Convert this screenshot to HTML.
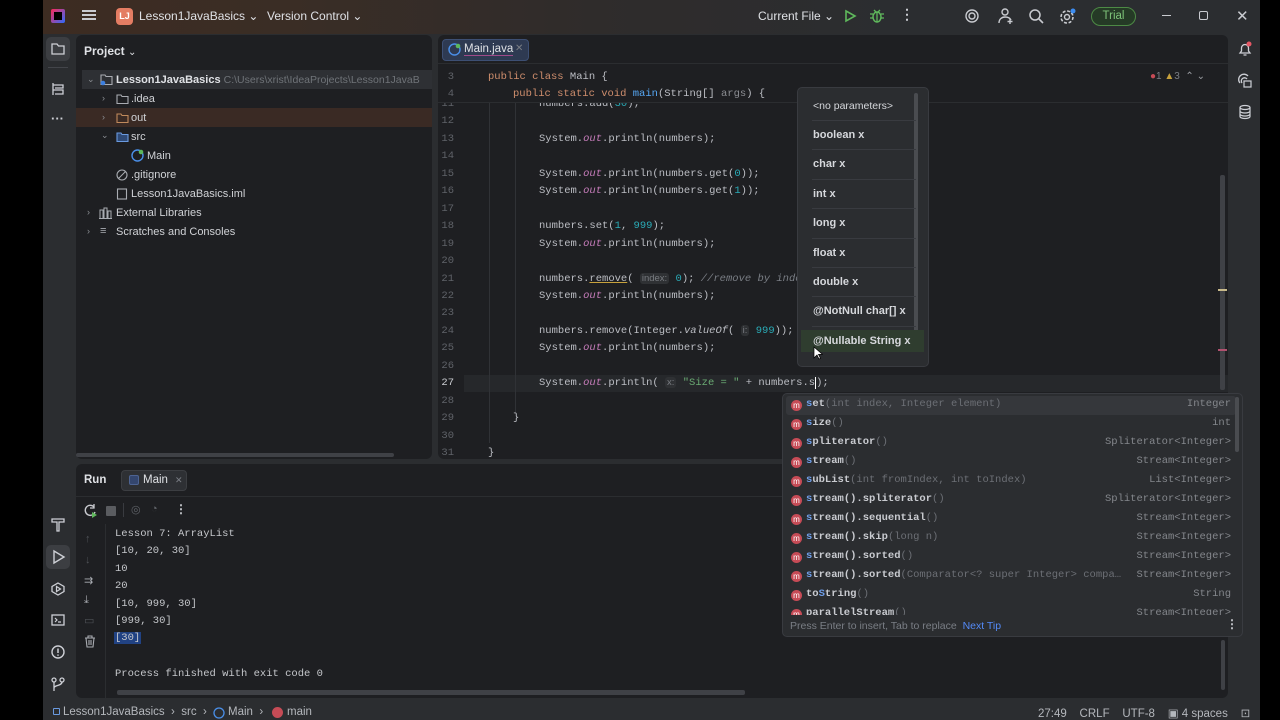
<!DOCTYPE html>
<html><head><meta charset="utf-8">
<style>
*{margin:0;padding:0;box-sizing:border-box}
body{width:1280px;height:720px;background:#000;position:relative;overflow:hidden;font-family:"Liberation Sans",sans-serif;color:#c9cbd0;font-size:11.5px}
.a{position:absolute;white-space:pre}
#win{position:absolute;left:43px;top:0;width:1217px;height:720px;background:#2b2d30}
#title{position:absolute;left:43px;top:0;width:1217px;height:34px;background:linear-gradient(90deg,#3d2c22 0%,#3a2d25 20%,#2f2c2b 45%,#2b2d30 70%)}
.panel{position:absolute;background:#1e1f22;border-radius:6px}
.ln{color:#5f6268;font-family:"Liberation Mono",monospace;font-size:10.5px;position:absolute;left:440px;width:14px;text-align:right}
.code{position:absolute;font-family:"Liberation Mono",monospace;font-size:10.5px;color:#bcbec4;white-space:pre}
.ln,.code,.out,.tr,.pr,.cr,.ct,.mi,.sb{margin-top:2px}
.k{color:#cf8e6d}.f{color:#56a8f5}.s{color:#c77dbb;font-style:italic}.n{color:#2aacb8}.st{color:#6aab73}.c{color:#7a7e85;font-style:italic}
.hint{background:#2f3134;color:#787b80;border-radius:3px;padding:0 2px;font-family:"Liberation Sans",sans-serif;font-size:9.5px}
.pr{position:absolute;left:813px;font-size:11px;color:#d6d8dc}
.sep{position:absolute;left:812px;width:104px;height:1px;background:#393b40}
.cr{position:absolute;left:806px;font-family:"Liberation Mono",monospace;font-size:10.5px;color:#c9cbd0;font-weight:bold;white-space:pre}
.cr i{font-style:normal;font-weight:normal;color:#6c6f75}
.cr b{color:#6f9ee8}
.ct{position:absolute;right:49px;font-family:"Liberation Mono",monospace;font-size:10.5px;color:#84878c;white-space:pre}
.mi{position:absolute;left:791px;width:11px;height:11px;border-radius:50%;background:#c64b56;color:#fff;font-size:8px;line-height:11px;text-align:center;font-family:"Liberation Sans",sans-serif}
.tr{position:absolute;font-size:11px;color:#d0d2d6;white-space:pre}
.out{position:absolute;left:115px;font-family:"Liberation Mono",monospace;font-size:10.5px;color:#c5c7cb;white-space:pre}
</style></head><body>
<div id="win"></div>
<div id="title"></div>
<!-- title bar -->
<div class="a" style="left:51px;top:9px;width:14px;height:14px;background:linear-gradient(135deg,#fe2857,#2b6bff);border-radius:2px"></div>
<div class="a" style="left:54px;top:12px;width:8px;height:8px;background:#000"></div>
<div class="a" style="left:82px;top:10px;width:14px;height:2px;background:#c9cbd0;box-shadow:0 4px 0 #c9cbd0,0 8px 0 #c9cbd0"></div>
<div class="a" style="left:116px;top:8px;width:17px;height:17px;background:#e47d63;border-radius:4px;color:#fff;font-size:9px;line-height:17px;text-align:center;font-weight:bold">LJ</div>
<div class="a" style="left:139px;top:9px;font-size:12px;color:#dfe1e5">Lesson1JavaBasics ⌄</div>
<div class="a" style="left:267px;top:9px;font-size:12px;color:#dfe1e5">Version Control ⌄</div>
<div class="a" style="left:758px;top:9px;font-size:12px;color:#dfe1e5">Current File ⌄</div>
<svg class="a" style="left:843px;top:9px" width="14" height="14"><path d="M3 2 L12 7 L3 12 Z" fill="none" stroke="#5fb85c" stroke-width="1.6"/></svg>
<svg class="a" style="left:869px;top:8px" width="16" height="16"><ellipse cx="8" cy="9" rx="4" ry="5" fill="none" stroke="#5fb85c" stroke-width="1.5"/><path d="M1 6h3M12 6h3M1 10h3M12 10h3M8 4v10M5 2l2 2M11 2l-2 2" stroke="#5fb85c" stroke-width="1.3"/></svg>
<div class="a" style="left:900px;top:6px;font-size:14px;color:#c9cbd0;font-weight:bold">⋮</div>
<svg class="a" style="left:964px;top:8px" width="16" height="16"><circle cx="8" cy="8" r="6" fill="none" stroke="#c9cbd0" stroke-width="1.4"/><circle cx="8" cy="8" r="3" fill="none" stroke="#c9cbd0" stroke-width="1.4"/></svg>
<svg class="a" style="left:997px;top:7px" width="18" height="18"><circle cx="8" cy="5" r="3" fill="none" stroke="#c9cbd0" stroke-width="1.4"/><path d="M2 16c0-4 3-6 6-6s5 1 6 3M13 12v5M10.5 14.5h5" fill="none" stroke="#c9cbd0" stroke-width="1.4"/></svg>
<svg class="a" style="left:1028px;top:8px" width="16" height="16"><circle cx="7" cy="7" r="5" fill="none" stroke="#c9cbd0" stroke-width="1.5"/><path d="M11 11l4 4" stroke="#c9cbd0" stroke-width="1.6"/></svg>
<svg class="a" style="left:1059px;top:8px" width="18" height="18"><circle cx="8" cy="9" r="6" fill="none" stroke="#c9cbd0" stroke-width="1.6" stroke-dasharray="3 1.7"/><circle cx="8" cy="9" r="2.5" fill="none" stroke="#c9cbd0" stroke-width="1.4"/><circle cx="14" cy="3" r="2.5" fill="#3c8cf0"/></svg>
<div class="a" style="left:1091px;top:7px;width:45px;height:19px;border:1px solid #4d8a45;background:#253a26;border-radius:10px;color:#7ec47a;font-size:11.5px;text-align:center;line-height:17px">Trial</div>
<div class="a" style="left:1162px;top:15px;width:9px;height:1px;background:#c9cbd0"></div>
<div class="a" style="left:1199px;top:11px;width:9px;height:9px;border:1.3px solid #c9cbd0;border-radius:2px"></div>
<div class="a" style="left:1236px;top:7px;font-size:15px;color:#c9cbd0">✕</div>

<!-- left stripe -->
<div class="a" style="left:46px;top:37px;width:24px;height:24px;background:#3c3e42;border-radius:5px"></div>
<svg class="a" style="left:50px;top:41px" width="16" height="16"><path d="M2 3h5l1.5 2H14v8H2z" fill="none" stroke="#ced0d6" stroke-width="1.3"/></svg>
<div class="a" style="left:48px;top:67px;width:20px;height:1px;background:#43454a"></div>
<svg class="a" style="left:50px;top:81px" width="16" height="16"><path d="M3 2v12M3 4h10v3H5M3 9h10v4H5" fill="none" stroke="#ced0d6" stroke-width="1.3"/></svg>
<div class="a" style="left:51px;top:111px;font-size:13px;color:#ced0d6;font-weight:bold">···</div>
<svg class="a" style="left:50px;top:517px" width="16" height="16"><path d="M2 2h12v3H9v9H7V5H2z" fill="none" stroke="#ced0d6" stroke-width="1.3"/></svg>
<div class="a" style="left:46px;top:545px;width:24px;height:24px;background:#3c3e42;border-radius:5px"></div>
<svg class="a" style="left:50px;top:549px" width="16" height="16"><path d="M4 2l10 6-10 6z" fill="none" stroke="#ced0d6" stroke-width="1.4"/></svg>
<svg class="a" style="left:50px;top:581px" width="16" height="16"><path d="M8 2l6 3.5v5L8 14l-6-3.5v-5z" fill="none" stroke="#ced0d6" stroke-width="1.3"/><path d="M6.5 5.5l4 2.5-4 2.5z" fill="none" stroke="#ced0d6" stroke-width="1.2"/></svg>
<svg class="a" style="left:50px;top:612px" width="16" height="16"><rect x="2" y="3" width="12" height="10" fill="none" stroke="#ced0d6" stroke-width="1.3"/><path d="M5 6l2 2-2 2M8 10h3" fill="none" stroke="#ced0d6" stroke-width="1.2"/></svg>
<svg class="a" style="left:50px;top:644px" width="16" height="16"><circle cx="8" cy="8" r="6" fill="none" stroke="#ced0d6" stroke-width="1.4"/><path d="M8 4.5v4.5M8 10.5v1.3" stroke="#ced0d6" stroke-width="1.5"/></svg>
<svg class="a" style="left:50px;top:676px" width="16" height="16"><circle cx="4" cy="4" r="2" fill="none" stroke="#ced0d6" stroke-width="1.3"/><circle cx="12" cy="4" r="2" fill="none" stroke="#ced0d6" stroke-width="1.3"/><path d="M4 6v9M12 6c0 4-8 3-8 6" fill="none" stroke="#ced0d6" stroke-width="1.3"/></svg>

<!-- project panel -->
<div class="panel" style="left:76px;top:35px;width:356px;height:424px"></div>
<div class="a" style="left:84px;top:44px;font-size:12px;color:#dfe1e5;font-weight:bold">Project <span style="font-weight:normal;font-size:10px">⌄</span></div>
<div class="a" style="left:82px;top:70px;width:350px;height:19px;background:#2e3034"></div>
<div class="a" style="left:76px;top:108px;width:356px;height:19px;background:#3a2a24"></div>
<div class="tr" style="left:87px;top:72px;color:#8c8f94;font-size:9px">⌄</div>
<svg class="a" style="left:100px;top:73px" width="14" height="13"><path d="M1 2h4l1 1.5h6v8H1z" fill="none" stroke="#a9acb2" stroke-width="1.1"/><circle cx="3" cy="10" r="2.3" fill="#3c7fe0"/></svg>
<div class="tr" style="left:116px;top:72px;font-weight:bold;color:#dfe1e5">Lesson1JavaBasics <span style="font-weight:normal;color:#6f7378;font-size:10.5px">C:\Users\xrist\IdeaProjects\Lesson1JavaB</span></div>
<div class="tr" style="left:102px;top:91px;color:#8c8f94;font-size:9px">›</div>
<svg class="a" style="left:116px;top:93px" width="13" height="12"><path d="M1 2h4l1 1.5h6v7H1z" fill="none" stroke="#a9acb2" stroke-width="1.1"/></svg>
<div class="tr" style="left:131px;top:91px">.idea</div>
<div class="tr" style="left:102px;top:110px;color:#8c8f94;font-size:9px">›</div>
<svg class="a" style="left:116px;top:112px" width="13" height="12"><path d="M1 2h4l1 1.5h6v7H1z" fill="none" stroke="#c08a5c" stroke-width="1.1"/></svg>
<div class="tr" style="left:131px;top:110px">out</div>
<div class="tr" style="left:101px;top:128px;color:#8c8f94;font-size:9px">⌄</div>
<svg class="a" style="left:116px;top:131px" width="13" height="12"><path d="M1 2h4l1 1.5h6v7H1z" fill="#2f4a76" stroke="#6a9ae0" stroke-width="1.1"/></svg>
<div class="tr" style="left:131px;top:129px">src</div>
<svg class="a" style="left:131px;top:149px" width="13" height="13"><circle cx="6.5" cy="6.5" r="5.5" fill="none" stroke="#4a8fe8" stroke-width="1.4"/><circle cx="10" cy="3" r="2.3" fill="#5bb85c"/></svg>
<div class="tr" style="left:147px;top:148px">Main</div>
<svg class="a" style="left:116px;top:169px" width="12" height="12"><circle cx="6" cy="6" r="5" fill="none" stroke="#a9acb2" stroke-width="1.1"/><path d="M2.5 9.5l7-7" stroke="#a9acb2"/></svg>
<div class="tr" style="left:131px;top:167px">.gitignore</div>
<svg class="a" style="left:116px;top:188px" width="12" height="12"><rect x="1.5" y="1" width="9" height="10" fill="none" stroke="#a9acb2" stroke-width="1.1"/></svg>
<div class="tr" style="left:131px;top:186px">Lesson1JavaBasics.iml</div>
<div class="tr" style="left:87px;top:205px;color:#8c8f94;font-size:9px">›</div>
<svg class="a" style="left:99px;top:207px" width="13" height="12"><path d="M1 11V3h3v8M5 11V1h3v10M9 11V4h3v7M0 11.5h13" fill="none" stroke="#a9acb2" stroke-width="1"/></svg>
<div class="tr" style="left:116px;top:205px">External Libraries</div>
<div class="tr" style="left:87px;top:224px;color:#8c8f94;font-size:9px">›</div>
<div class="tr" style="left:100px;top:223px;color:#a9acb2">≡</div>
<div class="tr" style="left:116px;top:224px">Scratches and Consoles</div>
<div class="a" style="left:76px;top:453px;width:318px;height:4px;background:#3f4146;border-radius:2px"></div>

<!-- editor -->
<div class="panel" style="left:438px;top:35px;width:790px;height:424px;background:#1e1f22"></div>
<div class="a" style="left:438px;top:63px;width:790px;height:1px;background:#2b2d30"></div>
<div class="a" style="left:442px;top:39px;width:87px;height:22px;background:#2e3a52;border:1px solid #3d4f73;border-radius:4px"></div>
<svg class="a" style="left:448px;top:43px" width="13" height="13"><circle cx="6.5" cy="6.5" r="5.5" fill="none" stroke="#4a8fe8" stroke-width="1.4"/><circle cx="10" cy="3" r="2.3" fill="#5bb85c"/></svg>
<div class="a" style="left:464px;top:43px;font-size:11.5px;color:#dfe1e5;border-bottom:1px solid #a04a8a">Main.java</div>
<div class="a" style="left:515px;top:43px;font-size:10px;color:#7a7e85">✕</div>

<div class="a" style="left:464px;top:375px;width:764px;height:17px;background:#26282b"></div>
<div class="a" style="left:489px;top:103px;width:1px;height:340px;background:#303236"></div>
<div class="a" style="left:515px;top:103px;width:1px;height:310px;background:#303236"></div>
<!-- partial line 11 (behind sticky header) -->
<div class="code" style="left:539px;top:96px">numbers.add(<span class="n">30</span>);</div>
<div class="ln" style="top:96px">11</div>
<!-- sticky header -->
<div class="a" style="left:438px;top:64px;width:790px;height:38px;background:#1e1f22"></div>
<div class="a" style="left:438px;top:102px;width:790px;height:1px;background:#2b2d30"></div>
<div class="a" style="left:1150px;top:71px;font-size:10px;color:#c64b56">●<span style="color:#7a7e85">1</span> <span style="color:#c7a13c">▲</span><span style="color:#7a7e85">3</span> <span style="color:#9a9da2">&nbsp;⌃ ⌄</span></div>
<div class="ln" style="top:69px">3</div>
<div class="ln" style="top:86px">4</div>
<div class="code" style="left:488px;top:69px"><span class="k">public class</span> Main {</div>
<div class="code" style="left:513px;top:86px"><span class="k">public static void</span> <span class="f">main</span>(String[] <span style="color:#8b8d92">args</span>) {</div>

<div class="ln" style="top:113px">12</div><div class="ln" style="top:131px">13</div><div class="ln" style="top:148px">14</div><div class="ln" style="top:166px">15</div><div class="ln" style="top:183px">16</div><div class="ln" style="top:201px">17</div><div class="ln" style="top:218px">18</div><div class="ln" style="top:236px">19</div><div class="ln" style="top:253px">20</div><div class="ln" style="top:271px">21</div><div class="ln" style="top:288px">22</div><div class="ln" style="top:305px">23</div><div class="ln" style="top:323px">24</div><div class="ln" style="top:340px">25</div><div class="ln" style="top:358px">26</div><div class="ln" style="top:375px;color:#c9cbd0">27</div><div class="ln" style="top:393px">28</div><div class="ln" style="top:410px">29</div><div class="ln" style="top:428px">30</div><div class="ln" style="top:445px">31</div>

<div class="code" style="left:539px;top:131px">System.<span class="s">out</span>.println(numbers);</div>
<div class="code" style="left:539px;top:166px">System.<span class="s">out</span>.println(numbers.get(<span class="n">0</span>));</div>
<div class="code" style="left:539px;top:183px">System.<span class="s">out</span>.println(numbers.get(<span class="n">1</span>));</div>
<div class="code" style="left:539px;top:218px">numbers.set(<span class="n">1</span>, <span class="n">999</span>);</div>
<div class="code" style="left:539px;top:236px">System.<span class="s">out</span>.println(numbers);</div>
<div class="code" style="left:539px;top:271px">numbers.<span style="text-decoration:underline;text-decoration-color:#c7a13c">remove</span>( <span class="hint">index:</span> <span class="n">0</span>); <span class="c">//remove by inde</span></div>
<div class="code" style="left:539px;top:288px">System.<span class="s">out</span>.println(numbers);</div>
<div class="code" style="left:539px;top:323px">numbers.remove(Integer.<span style="font-style:italic">valueOf</span>( <span class="hint">i:</span> <span class="n">999</span>));</div>
<div class="code" style="left:539px;top:340px">System.<span class="s">out</span>.println(numbers);</div>
<div class="code" style="left:539px;top:375px">System.<span class="s">out</span>.println( <span class="hint">x:</span> <span class="st">"Size = "</span> + numbers.s<span style="border-left:1px solid #fff">)</span>;</div>
<div class="code" style="left:513px;top:410px">}</div>
<div class="code" style="left:488px;top:445px">}</div>

<div class="a" style="left:1220px;top:175px;width:5px;height:215px;background:#3f4146;border-radius:2px"></div>
<div class="a" style="left:1218px;top:289px;width:9px;height:2px;background:#c8b98a"></div>
<div class="a" style="left:1218px;top:349px;width:9px;height:2px;background:#b0516f"></div>

<!-- param popup -->
<div class="a" style="left:797px;top:87px;width:132px;height:280px;background:#2b2d30;border:1px solid #393b40;border-radius:5px"></div>
<div class="a" style="left:914px;top:93px;width:4px;height:245px;background:#4a4c50;border-radius:2px"></div>
<div class="a" style="left:801px;top:330px;width:123px;height:22px;background:#2f3d2f"></div>
<div class="pr" style="top:98px;font-size:10.5px">&lt;no parameters&gt;</div>
<div class="sep" style="top:120px"></div>
<div class="pr" style="top:127px;font-weight:bold">boolean x</div>
<div class="sep" style="top:149px"></div>
<div class="pr" style="top:156px;font-weight:bold">char x</div>
<div class="sep" style="top:179px"></div>
<div class="pr" style="top:186px;font-weight:bold">int x</div>
<div class="sep" style="top:208px"></div>
<div class="pr" style="top:215px;font-weight:bold">long x</div>
<div class="sep" style="top:238px"></div>
<div class="pr" style="top:245px;font-weight:bold">float x</div>
<div class="sep" style="top:267px"></div>
<div class="pr" style="top:274px;font-weight:bold">double x</div>
<div class="sep" style="top:296px"></div>
<div class="pr" style="top:303px;font-weight:bold">@NotNull char[] x</div>
<div class="sep" style="top:326px"></div>
<div class="pr" style="top:333px;font-weight:bold">@Nullable String x</div>
<svg class="a" style="left:813px;top:346px" width="10" height="14"><path d="M1 1v11l3-3 2 4 1.5-.7-2-4h4z" fill="#fff" stroke="#000" stroke-width=".7"/></svg>

<!-- run panel -->
<div class="panel" style="left:76px;top:464px;width:1152px;height:234px"></div>
<div class="a" style="left:84px;top:474px;font-size:11.5px;color:#dfe1e5;font-weight:bold">Run</div>
<div class="a" style="left:121px;top:470px;width:66px;height:21px;background:#2e3034;border:1px solid #3c3e42;border-radius:4px"></div>
<div class="a" style="left:129px;top:475px;width:10px;height:10px;background:#34466e;border:1px solid #4d6392;border-radius:2px"></div>
<div class="a" style="left:143px;top:474px;font-size:11.5px;color:#dfe1e5">Main</div>
<div class="a" style="left:175px;top:475px;font-size:9px;color:#7a7e85">✕</div>
<div class="a" style="left:76px;top:496px;width:1152px;height:1px;background:#2b2d30"></div>
<svg class="a" style="left:83px;top:503px" width="15" height="15"><path d="M11 4A5 5 0 1 0 12 9" fill="none" stroke="#c9cbd0" stroke-width="1.4"/><path d="M11 1v4H7" fill="none" stroke="#c9cbd0" stroke-width="1.3"/><path d="M9 9l5 3-5 3z" fill="#5fb85c"/></svg>
<div class="a" style="left:106px;top:506px;width:10px;height:10px;background:#5a5c60;border-radius:1px"></div>
<div class="a" style="left:123px;top:503px;width:1px;height:14px;background:#393b40"></div>
<div class="a" style="left:131px;top:503px;font-size:11px;color:#5f6268">◎</div>
<div class="a" style="left:151px;top:503px;font-size:11px;color:#5f6268">◔</div>
<div class="a" style="left:175px;top:502px;font-size:12px;color:#c9cbd0;font-weight:bold">⋮</div>
<div class="a" style="left:105px;top:524px;width:1px;height:174px;background:#2b2d30"></div>
<div class="a" style="left:85px;top:533px;font-size:11px;color:#4f5257">↑</div>
<div class="a" style="left:85px;top:554px;font-size:11px;color:#4f5257">↓</div>
<div class="a" style="left:84px;top:574px;font-size:11px;color:#a9acb2">⇉</div>
<div class="a" style="left:84px;top:594px;font-size:11px;color:#a9acb2">⤓</div>
<div class="a" style="left:84px;top:614px;font-size:11px;color:#4f5257">▭</div>
<svg class="a" style="left:84px;top:635px" width="12" height="13"><path d="M1 3h10M4 3V1h4v2M2 3l1 9h6l1-9M5 5v5M7 5v5" fill="none" stroke="#a9acb2" stroke-width="1.1"/></svg>
<div class="out" style="top:526px">Lesson 7: ArrayList</div>
<div class="out" style="top:543px">[10, 20, 30]</div>
<div class="out" style="top:561px">10</div>
<div class="out" style="top:578px">20</div>
<div class="out" style="top:596px">[10, 999, 30]</div>
<div class="out" style="top:613px">[999, 30]</div>
<div class="out" style="top:630px;background:#214283;padding:0 1px;left:114px">[30]</div>
<div class="out" style="top:666px">Process finished with exit code 0</div>
<div class="a" style="left:117px;top:690px;width:628px;height:5px;background:#3f4146;border-radius:2px"></div>
<div class="a" style="left:1221px;top:640px;width:4px;height:50px;background:#3f4146;border-radius:2px"></div>

<!-- completion popup -->
<div class="a" style="left:782px;top:393px;width:461px;height:244px;background:#2b2d30;border:1px solid #393b40;border-radius:5px;overflow:hidden">
<div style="position:absolute;left:3px;top:2px;width:450px;height:19px;background:#35373b;border-radius:3px"></div>
<div style="position:absolute;right:3px;top:3px;width:4px;height:55px;background:#4a4c50;border-radius:2px"></div>
</div>
<div class="a" style="left:782px;top:393px;width:461px;height:222px;overflow:hidden">
<div style="position:absolute;left:-782px;top:-393px;width:1280px;height:720px">
<div class="mi" style="top:398px">m</div><div class="cr" style="top:396px"><b>s</b>et<i>(int index, Integer element)</i></div><div class="ct" style="top:396px">Integer</div>
<div class="mi" style="top:417px">m</div><div class="cr" style="top:415px"><b>s</b>ize<i>()</i></div><div class="ct" style="top:415px">int</div>
<div class="mi" style="top:436px">m</div><div class="cr" style="top:434px"><b>s</b>pliterator<i>()</i></div><div class="ct" style="top:434px">Spliterator&lt;Integer&gt;</div>
<div class="mi" style="top:455px">m</div><div class="cr" style="top:453px"><b>s</b>tream<i>()</i></div><div class="ct" style="top:453px">Stream&lt;Integer&gt;</div>
<div class="mi" style="top:474px">m</div><div class="cr" style="top:472px"><b>s</b>ubList<i>(int fromIndex, int toIndex)</i></div><div class="ct" style="top:472px">List&lt;Integer&gt;</div>
<div class="mi" style="top:493px">m</div><div class="cr" style="top:491px"><b>s</b>tream().spliterator<i>()</i></div><div class="ct" style="top:491px">Spliterator&lt;Integer&gt;</div>
<div class="mi" style="top:512px">m</div><div class="cr" style="top:510px"><b>s</b>tream().sequential<i>()</i></div><div class="ct" style="top:510px">Stream&lt;Integer&gt;</div>
<div class="mi" style="top:531px">m</div><div class="cr" style="top:529px"><b>s</b>tream().skip<i>(long n)</i></div><div class="ct" style="top:529px">Stream&lt;Integer&gt;</div>
<div class="mi" style="top:550px">m</div><div class="cr" style="top:548px"><b>s</b>tream().sorted<i>()</i></div><div class="ct" style="top:548px">Stream&lt;Integer&gt;</div>
<div class="mi" style="top:569px">m</div><div class="cr" style="top:567px"><b>s</b>tream().sorted<i>(Comparator&lt;? super Integer&gt; compa…</i></div><div class="ct" style="top:567px">Stream&lt;Integer&gt;</div>
<div class="mi" style="top:588px">m</div><div class="cr" style="top:586px">to<b>S</b>tring<i>()</i></div><div class="ct" style="top:586px">String</div>
<div class="mi" style="top:607px">m</div><div class="cr" style="top:605px">parallelStream<i>()</i></div><div class="ct" style="top:605px">Stream&lt;Integer&gt;</div>
</div></div>
<div class="a" style="left:790px;top:620px;font-size:10.5px;color:#7a7e85">Press Enter to insert, Tab to replace&nbsp; <span style="color:#548af7">Next Tip</span></div>
<div class="a" style="left:1226px;top:617px;font-size:12px;color:#c9cbd0;font-weight:bold">⋮</div>

<!-- right stripe -->
<svg class="a" style="left:1237px;top:41px" width="16" height="16"><path d="M3 12h10l-1.5-2V7a3.5 3.5 0 0 0-7 0v3zM6.5 14h3" fill="none" stroke="#ced0d6" stroke-width="1.3"/><circle cx="12" cy="3" r="2.5" fill="#e55765"/></svg>
<svg class="a" style="left:1237px;top:73px" width="16" height="16"><path d="M3 10a5 5 0 0 1 8-7M5 10a3 3 0 0 1 5-4" fill="none" stroke="#ced0d6" stroke-width="1.3"/><rect x="7" y="8" width="7" height="6" fill="none" stroke="#ced0d6" stroke-width="1.2"/></svg>
<svg class="a" style="left:1237px;top:104px" width="16" height="16"><ellipse cx="8" cy="3.5" rx="5" ry="2" fill="none" stroke="#ced0d6" stroke-width="1.2"/><path d="M3 3.5v9c0 1.1 2.2 2 5 2s5-.9 5-2v-9M3 7c0 1.1 2.2 2 5 2s5-.9 5-2M3 10c0 1.1 2.2 2 5 2s5-.9 5-2" fill="none" stroke="#ced0d6" stroke-width="1.2"/></svg>

<!-- status bar -->
<div class="a" style="left:53px;top:708px;width:7px;height:7px;border:1px solid #6a9ae0;border-radius:1px"></div>
<div class="a sb" style="left:63px;top:704px;font-size:11.5px;color:#b4b7bc">Lesson1JavaBasics &nbsp;›&nbsp; src &nbsp;›&nbsp;</div>
<svg class="a" style="left:213px;top:707px" width="12" height="12"><circle cx="6" cy="6" r="5" fill="none" stroke="#4a8fe8" stroke-width="1.3"/></svg>
<div class="a sb" style="left:228px;top:704px;font-size:11.5px;color:#b4b7bc">Main &nbsp;›</div>
<div class="a" style="left:272px;top:707px;width:11px;height:11px;border-radius:50%;background:#c64b56"></div>
<div class="a sb" style="left:287px;top:704px;font-size:11.5px;color:#b4b7bc">main</div>
<div class="a sb" style="left:1038px;top:704px;font-size:11.5px;color:#b4b7bc">27:49&nbsp;&nbsp;&nbsp; CRLF&nbsp;&nbsp;&nbsp; UTF-8&nbsp;&nbsp;&nbsp; ▣ 4 spaces&nbsp;&nbsp;&nbsp; ⊡</div>
</body></html>
